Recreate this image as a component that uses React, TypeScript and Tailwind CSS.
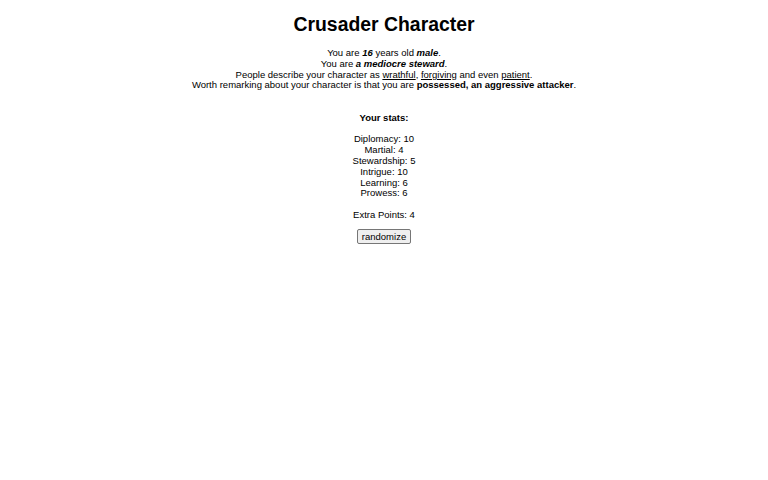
import { useState } from "react";

type Stats = {
  Diplomacy: number;
  Martial: number;
  Stewardship: number;
  Intrigue: number;
  Learning: number;
  Prowess: number;
};

export default function App() {
  const [stats] = useState<Stats>({
    Diplomacy: 10,
    Martial: 4,
    Stewardship: 5,
    Intrigue: 10,
    Learning: 6,
    Prowess: 6,
  });

  return (
    <main className="min-h-screen bg-white text-center text-black font-['Liberation_Sans',Arial,sans-serif]">
      <h1 className="pt-[13px] text-[19.4px] leading-[23px] font-bold">Crusader Character</h1>

      <div className="mt-[12px] text-[9.5px] leading-[10.8px]">
        <div>
          You are <b><i>16</i></b> years old <b><i>male</i></b>.
        </div>
        <div>
          You are <b><i>a mediocre steward</i></b>.
        </div>
        <div>
          People describe your character as <u>wrathful</u>, <u>forgiving</u> and even{" "}
          <u>patient</u>.
        </div>
        <div>
          Worth remarking about your character is that you are{" "}
          <b>possessed, an aggressive attacker</b>.
        </div>

        <div className="mt-[21.6px] font-bold">Your stats:</div>

        <div className="mt-[10.8px]">
          {Object.entries(stats).map(([name, value]) => (
            <div key={name}>
              {name}: {value}
            </div>
          ))}
        </div>

        <div className="mt-[10.8px]">Extra Points: 4</div>

        <button className="mt-[8px] px-[4px] h-[15px] leading-[13px] border border-[#767676] rounded-[2px] bg-[#efefef] text-[9.5px]">
          randomize
        </button>
      </div>
    </main>
  );
}
